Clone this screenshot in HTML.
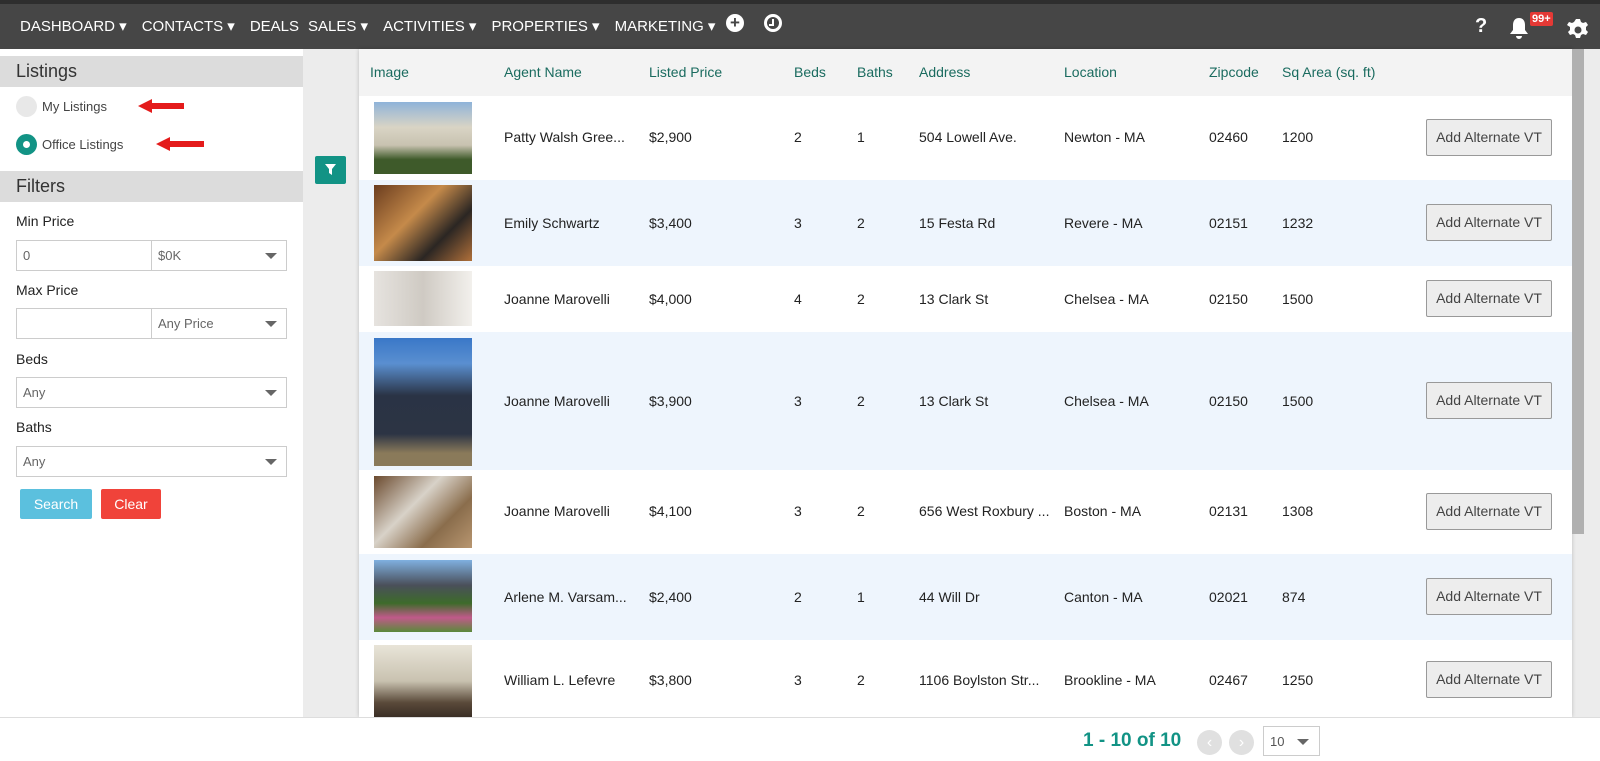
<!DOCTYPE html>
<html><head><meta charset="utf-8"><style>
*{box-sizing:border-box;margin:0;padding:0}
body{width:1600px;height:761px;overflow:hidden;font-family:"Liberation Sans",sans-serif;background:#ececec;position:relative;color:#222}
.abs{position:absolute}
.top{left:0;top:0;width:1600px;height:49px;background:#464646;border-top:4px solid #2e2e2e}
.nav{position:absolute;top:13px;color:#fff;font-size:15px;letter-spacing:0;white-space:nowrap}
.nav span{margin-right:15px}
.left{left:0;top:49px;width:303px;height:668px;background:#fff}
.sec{position:absolute;left:0;width:303px;background:#dcdcdc;font-size:18px;color:#333;padding-left:16px}
.lbl{position:absolute;left:16px;font-size:14px;color:#222}
.box{position:absolute;border:1px solid #ccc;background:#fff;font-size:13px;color:#666;padding-left:6px;display:flex;align-items:center}
.caret{position:absolute;right:9px;top:12px;width:0;height:0;border-left:6px solid transparent;border-right:6px solid transparent;border-top:6px solid #666}
.tbl{left:359px;top:49px;width:1213px;height:668px;background:#fff;box-shadow:0 0 4px rgba(0,0,0,.2)}
.row{position:absolute;left:0;width:1213px}
.c{position:absolute;font-size:14px;color:#222;white-space:nowrap}
.hd{color:#1a6b5f}
.btn{position:absolute;left:1067px;width:126px;height:37px;border:1px solid #999;border-radius:2px;background:#ededed;font-size:14px;color:#444;text-align:center;line-height:35px}
.img{position:absolute;left:15px;width:98px}
</style></head><body>
<div class="abs top">
 <div class="nav" style="left:20px"><span>DASHBOARD ▾</span><span>CONTACTS ▾</span><span>DEALS</span><span style="margin-left:-6px">SALES ▾</span><span>ACTIVITIES ▾</span><span>PROPERTIES ▾</span><span>MARKETING ▾</span></div>
 <div class="abs" style="left:726px;top:10px;width:18px;height:18px;border-radius:50%;background:#fff;color:#464646;font-weight:bold;font-size:17px;text-align:center;line-height:18px">+</div>
 <div class="abs" style="left:764px;top:10px;width:18px;height:18px;border-radius:50%;border:3px solid #fff"><div class="abs" style="left:5px;top:2px;width:2px;height:6px;background:#fff"></div><div class="abs" style="left:2px;top:7px;width:5px;height:2px;background:#fff"></div></div>
 <div class="abs" style="left:1475px;top:11px;color:#fff;font-weight:bold;font-size:20px">?</div>
 <svg class="abs" style="left:1508px;top:12px" width="22" height="24" viewBox="0 0 22 24"><path d="M11 2c-4 0-6 3-6 7v5l-3 4h18l-3-4V9c0-4-2-7-6-7zM8 20a3 3 0 006 0z" fill="#fff"/></svg>
 <div class="abs" style="left:1530px;top:8px;background:#e53935;color:#fff;font-size:11px;font-weight:bold;padding:1px 2px;border-radius:2px">99+</div>
 <svg class="abs" style="left:1566px;top:14px" width="24" height="24" viewBox="0 0 24 24"><path fill="#fff" d="M10 1h4l1 3 2 1 3-1 2 3-2 2v3l2 2-2 3-3-1-2 1-1 3h-4l-1-3-2-1-3 1-2-3 2-2V9L1 7l2-3 3 1 2-1z"/><circle cx="12" cy="12" r="3.5" fill="#464646"/></svg>
</div>
<div class="abs left">
 <div class="sec" style="top:7px;height:31px;line-height:31px">Listings</div>
 <div class="abs" style="left:16px;top:47px;width:21px;height:21px;border-radius:50%;background:#e8e8e8"></div>
 <div class="lbl" style="left:42px;top:50px;font-size:13px;color:#444">My Listings</div>
 <div class="abs" style="left:138px;top:50px;width:48px;height:14px"><svg width="48" height="14"><path d="M0 7L14 0v4h32v6H14v4z" fill="#e41b1b"/></svg></div>
 <div class="abs" style="left:16px;top:85px;width:21px;height:21px;border-radius:50%;background:#129385"><div class="abs" style="left:7px;top:7px;width:7px;height:7px;border-radius:50%;background:#fff"></div></div>
 <div class="lbl" style="left:42px;top:88px;font-size:13px;color:#444">Office Listings</div>
 <div class="abs" style="left:156px;top:88px"><svg width="50" height="14"><path d="M0 7L14 0v4h34v6H14v4z" fill="#e41b1b"/></svg></div>
 <div class="sec" style="top:122px;height:31px;line-height:31px">Filters</div>
 <div class="lbl" style="top:164px">Min Price</div>
 <div class="box" style="left:16px;top:191px;width:136px;height:31px">0</div>
 <div class="box" style="left:151px;top:191px;width:136px;height:31px">$0K<div class="caret"></div></div>
 <div class="lbl" style="top:233px">Max Price</div>
 <div class="box" style="left:16px;top:259px;width:136px;height:31px"></div>
 <div class="box" style="left:151px;top:259px;width:136px;height:31px">Any Price<div class="caret"></div></div>
 <div class="lbl" style="top:302px">Beds</div>
 <div class="box" style="left:16px;top:328px;width:271px;height:31px">Any<div class="caret"></div></div>
 <div class="lbl" style="top:370px">Baths</div>
 <div class="box" style="left:16px;top:397px;width:271px;height:31px">Any<div class="caret"></div></div>
 <div class="abs" style="left:20px;top:440px;width:72px;height:30px;background:#5bc0de;color:#fff;font-size:14px;text-align:center;line-height:30px;border-radius:2px">Search</div>
 <div class="abs" style="left:101px;top:440px;width:60px;height:30px;background:#f0433a;color:#fff;font-size:14px;text-align:center;line-height:30px;border-radius:2px">Clear</div>
</div>
<div class="abs" style="left:315px;top:156px;width:31px;height:28px;background:#129385;border-radius:2px"><svg class="abs" style="left:10px;top:8px" width="11" height="11"><path d="M0 0h11L7 5v6L4 9V5z" fill="#fff"/></svg></div>
<div class="abs tbl">
 <div class="row" style="top:0;height:47px;background:#f3f3f3">
  <div class="c hd" style="left:11px;top:15px">Image</div><div class="c hd" style="left:145px;top:15px">Agent Name</div><div class="c hd" style="left:290px;top:15px">Listed Price</div><div class="c hd" style="left:435px;top:15px">Beds</div><div class="c hd" style="left:498px;top:15px">Baths</div><div class="c hd" style="left:560px;top:15px">Address</div><div class="c hd" style="left:705px;top:15px">Location</div><div class="c hd" style="left:850px;top:15px">Zipcode</div><div class="c hd" style="left:923px;top:15px">Sq Area (sq. ft)</div>
 </div>
 <div class="row" style="top:47px;height:84px;background:#fff"><div class="img" style="top:6px;height:72px;background:linear-gradient(#8fb3d9 0,#d9d4c5 35%,#c8c2b0 60%,#3e5a2a 80%)"></div><div class="c" style="left:145px;top:33px">Patty Walsh Gree...</div><div class="c" style="left:290px;top:33px">$2,900</div><div class="c" style="left:435px;top:33px">2</div><div class="c" style="left:498px;top:33px">1</div><div class="c" style="left:560px;top:33px">504 Lowell Ave.</div><div class="c" style="left:705px;top:33px">Newton - MA</div><div class="c" style="left:850px;top:33px">02460</div><div class="c" style="left:923px;top:33px">1200</div><div class="btn" style="top:23px">Add Alternate VT</div></div>
 <div class="row" style="top:131px;height:86px;background:#eef5fd"><div class="img" style="top:5px;height:76px;background:linear-gradient(135deg,#6b3d1f,#c58a4a 40%,#2b2623 70%,#b0703a)"></div><div class="c" style="left:145px;top:35px">Emily Schwartz</div><div class="c" style="left:290px;top:35px">$3,400</div><div class="c" style="left:435px;top:35px">3</div><div class="c" style="left:498px;top:35px">2</div><div class="c" style="left:560px;top:35px">15 Festa Rd</div><div class="c" style="left:705px;top:35px">Revere - MA</div><div class="c" style="left:850px;top:35px">02151</div><div class="c" style="left:923px;top:35px">1232</div><div class="btn" style="top:24px">Add Alternate VT</div></div>
 <div class="row" style="top:217px;height:66px;background:#fff"><div class="img" style="top:5px;height:55px;background:linear-gradient(90deg,#e6e3df,#cfcac3 50%,#f2f0ec)"></div><div class="c" style="left:145px;top:25px">Joanne Marovelli</div><div class="c" style="left:290px;top:25px">$4,000</div><div class="c" style="left:435px;top:25px">4</div><div class="c" style="left:498px;top:25px">2</div><div class="c" style="left:560px;top:25px">13 Clark St</div><div class="c" style="left:705px;top:25px">Chelsea - MA</div><div class="c" style="left:850px;top:25px">02150</div><div class="c" style="left:923px;top:25px">1500</div><div class="btn" style="top:14px">Add Alternate VT</div></div>
 <div class="row" style="top:283px;height:138px;background:#eef5fd"><div class="img" style="top:6px;height:128px;background:linear-gradient(#3a78c8 0,#5a8fd0 20%,#2a3345 45%,#2c3444 75%,#8a7a5a 90%)"></div><div class="c" style="left:145px;top:61px">Joanne Marovelli</div><div class="c" style="left:290px;top:61px">$3,900</div><div class="c" style="left:435px;top:61px">3</div><div class="c" style="left:498px;top:61px">2</div><div class="c" style="left:560px;top:61px">13 Clark St</div><div class="c" style="left:705px;top:61px">Chelsea - MA</div><div class="c" style="left:850px;top:61px">02150</div><div class="c" style="left:923px;top:61px">1500</div><div class="btn" style="top:50px">Add Alternate VT</div></div>
 <div class="row" style="top:421px;height:84px;background:#fff"><div class="img" style="top:6px;height:72px;background:linear-gradient(135deg,#6b4a2e,#d8d2c8 40%,#8a6d4c 70%,#b89670)"></div><div class="c" style="left:145px;top:33px">Joanne Marovelli</div><div class="c" style="left:290px;top:33px">$4,100</div><div class="c" style="left:435px;top:33px">3</div><div class="c" style="left:498px;top:33px">2</div><div class="c" style="left:560px;top:33px">656 West Roxbury ...</div><div class="c" style="left:705px;top:33px">Boston - MA</div><div class="c" style="left:850px;top:33px">02131</div><div class="c" style="left:923px;top:33px">1308</div><div class="btn" style="top:23px">Add Alternate VT</div></div>
 <div class="row" style="top:505px;height:86px;background:#eef5fd"><div class="img" style="top:6px;height:72px;background:linear-gradient(#7fb0e0 0,#4a4f5a 35%,#3d6b2a 60%,#c05a8a 80%,#5a8a3a)"></div><div class="c" style="left:145px;top:35px">Arlene M. Varsam...</div><div class="c" style="left:290px;top:35px">$2,400</div><div class="c" style="left:435px;top:35px">2</div><div class="c" style="left:498px;top:35px">1</div><div class="c" style="left:560px;top:35px">44 Will Dr</div><div class="c" style="left:705px;top:35px">Canton - MA</div><div class="c" style="left:850px;top:35px">02021</div><div class="c" style="left:923px;top:35px">874</div><div class="btn" style="top:24px">Add Alternate VT</div></div>
 <div class="row" style="top:591px;height:77px;background:#fff"><div class="img" style="top:5px;height:72px;background:linear-gradient(#e8e4d8 0,#c9c2b0 50%,#5a4a3a 80%,#3a2e25)"></div><div class="c" style="left:145px;top:32px">William L. Lefevre</div><div class="c" style="left:290px;top:32px">$3,800</div><div class="c" style="left:435px;top:32px">3</div><div class="c" style="left:498px;top:32px">2</div><div class="c" style="left:560px;top:32px">1106 Boylston Str...</div><div class="c" style="left:705px;top:32px">Brookline - MA</div><div class="c" style="left:850px;top:32px">02467</div><div class="c" style="left:923px;top:32px">1250</div><div class="btn" style="top:21px">Add Alternate VT</div></div>
</div>
<div class="abs" style="left:1572px;top:49px;width:12px;height:485px;background:#b0b0b0"></div>
<div class="abs" style="left:0;top:717px;width:1600px;height:44px;background:#fff;border-top:1px solid #ddd">
 <div class="abs" style="left:1083px;top:12px;font-size:19px;font-weight:bold;color:#129385">1 - 10 of 10</div>
 <div class="abs" style="left:1197px;top:12px;width:25px;height:25px;border-radius:50%;background:#e0e0e0;color:#fff;text-align:center;line-height:25px">‹</div>
 <div class="abs" style="left:1229px;top:12px;width:25px;height:25px;border-radius:50%;background:#e0e0e0;color:#fff;text-align:center;line-height:25px">›</div>
 <div class="abs" style="left:1263px;top:8px;width:57px;height:30px;border:1px solid #ccc;font-size:13px;color:#555;padding:7px 0 0 6px">10<div class="caret" style="top:12px;right:10px"></div></div>
</div>
</body></html>
